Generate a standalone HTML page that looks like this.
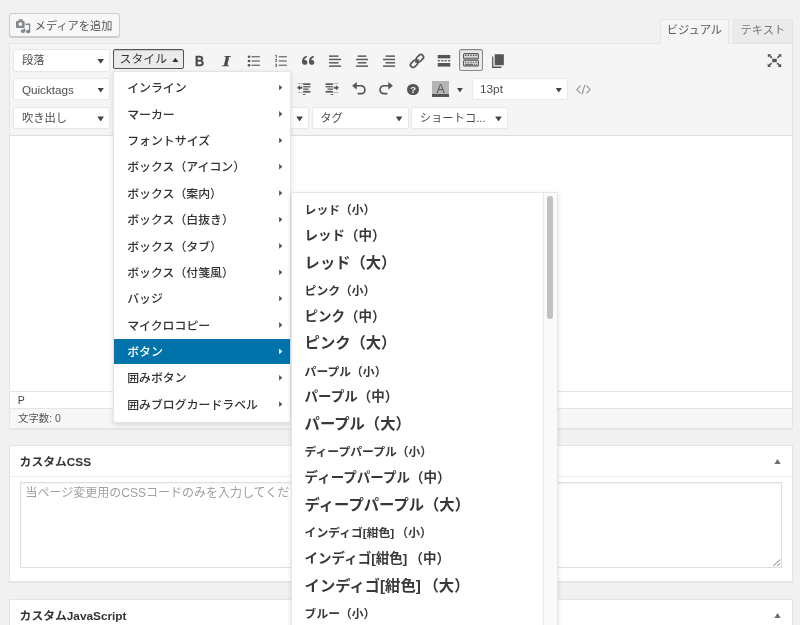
<!DOCTYPE html>
<html lang="ja">
<head>
<meta charset="utf-8">
<title>投稿の編集</title>
<style>
*{box-sizing:border-box;margin:0;padding:0}
html,body{width:800px;height:625px;overflow:hidden;background:#f1f1f1}
body{position:relative;will-change:transform;font-family:"Liberation Sans","Noto Sans CJK JP",sans-serif;font-size:11.3px;color:#444}
.abs{position:absolute}
i{display:block}
.ic{fill:#555}
#media{left:9px;top:13.3px;width:111px;height:23.7px;border:1px solid #ccc;border-radius:3px;background:#f7f7f7;box-shadow:0 1px 0 #ccc;color:#555}
#media span{position:absolute;left:24.8px;top:1.3px;line-height:21px;font-size:11.2px;white-space:nowrap}
.tab{font-size:11.3px;text-align:center;white-space:nowrap}
#tab1{left:660px;top:19px;width:69px;height:25px;background:#f5f5f5;border:1px solid #e5e5e5;border-bottom:none;color:#555;line-height:20.6px}
#tab2{left:733px;top:19px;width:60px;height:24px;background:#ebebeb;border:1px solid #e5e5e5;color:#777;line-height:20.6px}
#ed{left:9px;top:43px;width:784px;height:385.5px;border:1px solid #e5e5e5;background:#fff;box-shadow:0 1px 1px rgba(0,0,0,.04)}
#tb{left:0;top:0;width:782px;height:92px;background:#f5f5f5;border-bottom:1px solid #ddd}
#path{left:0;top:347px;width:782px;height:17px;border-top:1px solid #e5e5e5;background:#fff;font-size:10.5px;line-height:16px;padding-left:7.8px;color:#444}
#wc{left:0;top:364px;width:782px;height:20px;border-top:1px solid #e5e5e5;background:#f7f7f7;font-size:10.4px;line-height:19px;padding-left:8px;color:#555}
.sel{height:22.4px;background:#fff;border:1px solid #e8e8e8;border-radius:2px;font-size:11.3px;line-height:21px;padding-left:7.5px;color:#4d4d4d;white-space:nowrap}
.sel:after{content:"";position:absolute;left:83px;top:8.7px;width:6.6px;height:4.9px;background:#444;clip-path:polygon(0 0,100% 0,50% 100%)}
#stylebtn{left:113px;top:49px;width:71px;height:19.6px;border:1px solid #555;border-radius:2px;background:#ebebeb;box-shadow:inset 0 1px 1px rgba(0,0,0,.15);font-size:11.9px;line-height:18px;padding-left:5.5px;color:#333;white-space:nowrap}
#stylebtn i{position:absolute;left:58px;top:7.7px;width:6.7px;height:4.7px;background:#333;clip-path:polygon(0 100%,100% 100%,50% 0)}
.menu{background:#fff;border:1px solid #e5e5e5;box-shadow:0 2px 5px rgba(0,0,0,.13)}
.mi{font-weight:500;position:absolute;left:0;width:100%;height:24.7px;line-height:26px;font-size:11.9px;color:#333;padding-left:13.2px;white-space:nowrap}
.mi:after{content:"";position:absolute;left:165.1px;top:9.5px;width:3.3px;height:5.8px;background:#555;clip-path:polygon(0 0,100% 50%,0 100%)}
.mi.act{background:#0073aa;color:#fff}
.mi.act:after{background:#fff}
.m2{position:absolute;left:12.6px;font-weight:bold;color:#383838;white-space:nowrap;line-height:26px}
.pb{left:9px;width:784px;background:#fff;border:1px solid #e5e5e5;box-shadow:0 1px 1px rgba(0,0,0,.04)}
.pb h2{position:absolute;left:9.6px;top:.6px;font-size:11.8px;line-height:31px;font-weight:bold;color:#333;white-space:nowrap}
.pb .hd{position:absolute;left:0;top:0;width:782px;height:31px;border-bottom:1px solid #eee}
.pb .tg{position:absolute;left:764.2px;top:13.1px;width:6.7px;height:5.1px;background:#6c7074;clip-path:polygon(0 100%,100% 100%,50% 0)}
#ta{left:9.5px;top:35.6px;width:762.6px;height:86.4px;border:1px solid #dfdfdf;box-shadow:inset 0 1px 2px rgba(0,0,0,.05);font-size:12px;color:#a0a0a0;padding:.9px 5px;white-space:nowrap;overflow:hidden}
</style>
</head>
<body>
<div id="media" class="abs"><svg class="abs" style="left:6px;top:4.700px;width:15px;height:15px;overflow:visible" viewBox="0 0 15 15" fill="#82878c"><path fill-rule="evenodd" d="M.9 2.100h1.700V1c0-.4.300-.75.750-.75h2.650c.4 0 .75.300.75.750v1.100h.950c.5 0 .9.400.9.900v5c0 .5-.4.900-.9.900H.9c-.5 0-.9-.4-.9-.9V3c0-.5.400-.9.900-.9zM4.350 3.200a1.900 1.900 0 1 0 0 3.800 1.900 1.900 0 1 0 0-3.800z"/><path d="M9.300 4.400h4.950v1.500H9.300zM12.900 5.500h1.350v6.800H12.900zM8 9.600h1.300v2.100H8z"/><ellipse cx="12.100" cy="12.500" rx="2.200" ry="1.850"/><ellipse cx="7" cy="12.100" rx="2.200" ry="1.850"/></svg><span>メディアを追加</span></div>
<div id="tab2" class="abs tab">テキスト</div>
<div id="ed" class="abs">
  <div id="tb" class="abs"></div>
  <div id="path" class="abs">P</div>
  <div id="wc" class="abs">文字数: 0</div>
</div>
<div id="tab1" class="abs tab">ビジュアル</div>
<div id="tools">
<div class="abs sel" style="left:13.4px;top:49.2px;width:96.8px">段落</div>
<div class="abs sel" style="left:13.4px;top:78px;width:96.8px"><span style="font-size:11.7px">Quicktags</span></div>
<div class="abs sel" style="left:13.4px;top:106.8px;width:96.8px">吹き出し</div>
<div class="abs sel" style="left:112.8px;top:106.8px;width:96.8px">&nbsp;</div>
<div class="abs sel" style="left:212.3px;top:106.8px;width:96.8px">&nbsp;</div>
<div class="abs sel" style="left:311.8px;top:106.8px;width:96.8px">タグ</div>
<div class="abs sel" style="left:411.2px;top:106.8px;width:96.8px">ショートコ...</div>
<div class="abs sel" style="left:471.5px;top:78px;width:96.8px"><span style="font-size:11.8px">13pt</span></div>
<div class="abs" id="stylebtn">スタイル<i></i></div>
<div class="abs" style="left:193px;top:50.6px;width:13px;height:20px;line-height:20px;text-align:center;font-weight:bold;font-size:14px;color:#4a4a4a;-webkit-text-stroke:.35px #4a4a4a;transform:scaleX(.9)">B</div>
<div class="abs" style="left:219.5px;top:50.6px;width:13px;height:20px;line-height:20px;text-align:center;font-weight:bold;font-style:italic;font-family:'Liberation Serif',serif;font-size:15.5px;color:#4a4a4a;-webkit-text-stroke:.25px #4a4a4a;transform:scaleX(1.3)">I</div>
<svg class="abs ic" style="left:244.7px;top:52.0px;width:18px;height:18px" viewBox="0 0 20 20"><circle cx="4.5" cy="5.3" r="1.5"/><circle cx="4.5" cy="10" r="1.5"/><circle cx="4.5" cy="14.7" r="1.5"/><rect x="7.2" y="4.7" width="9.3" height="1.2"/><rect x="7.2" y="9.4" width="9.3" height="1.2"/><rect x="7.2" y="14.1" width="9.3" height="1.2"/></svg>
<svg class="abs ic" style="left:272.0px;top:51.8px;width:18px;height:18px" viewBox="0 0 20 20"><rect x="7.5" y="4.7" width="9" height="1.2"/><rect x="7.5" y="9.4" width="9" height="1.2"/><rect x="7.5" y="14.1" width="9" height="1.2"/><path d="M4.2 3h1v3.6h-.9V4.2l-.7.3v-.8zM3.4 8.2c.3-.5 2.2-.7 2.2.6 0 .8-.9 1.2-1.2 1.7h1.3v.7H3.3v-.6c.5-.6 1.400-1.300 1.400-1.800 0-.4-.6-.3-.9 0zM3.4 13.1h2.200v.6l-.8.800c.6.100.9.500.9 1 0 1.200-1.800 1.200-2.400.6l.4-.600c.3.300 1.100.400 1.100-.100 0-.400-.500-.400-1-.400v-.600l.7-.700H3.4z"/></svg>
<svg class="abs ic" style="left:298.1px;top:50.8px;width:19.8px;height:19.8px" viewBox="0 0 20 20"><path d="M9.2 6.300C7.500 6.900 6.500 8 6.400 9.200c.2-.1.500-.1.700-.1 1.400 0 2.400 1 2.400 2.400S8.400 14 7 14c-1.700 0-3-1.300-3-3.400 0-2.900 1.800-5.100 4.700-5.700zm7 0c-1.700.6-2.700 1.700-2.800 2.900.2-.1.500-.1.700-.1 1.400 0 2.400 1 2.400 2.400S15.400 14 14 14c-1.700 0-3-1.300-3-3.400 0-2.900 1.800-5.100 4.700-5.700z"/></svg>
<svg class="abs ic" style="left:325.7px;top:51.8px;width:18px;height:18px" viewBox="0 0 20 20"><rect x="3.4" y="3.8" width="10.5" height="1.6"/><rect x="3.4" y="7.5" width="13.3" height="1.6"/><rect x="3.4" y="11.2" width="10.5" height="1.6"/><rect x="3.4" y="14.9" width="13.3" height="1.6"/></svg>
<svg class="abs ic" style="left:353.0px;top:51.8px;width:18px;height:18px" viewBox="0 0 20 20"><rect x="5.2" y="3.8" width="9.6" height="1.6"/><rect x="3.4" y="7.5" width="13.3" height="1.6"/><rect x="5.2" y="11.2" width="9.6" height="1.6"/><rect x="3.4" y="14.9" width="13.3" height="1.6"/></svg>
<svg class="abs ic" style="left:380.3px;top:51.8px;width:18px;height:18px" viewBox="0 0 20 20"><rect x="6.2" y="3.8" width="10.5" height="1.6"/><rect x="3.4" y="7.5" width="13.3" height="1.6"/><rect x="6.2" y="11.2" width="10.5" height="1.6"/><rect x="3.4" y="14.9" width="13.3" height="1.6"/></svg>
<svg class="abs ic" style="left:407.8px;top:51.8px;width:18px;height:18px" viewBox="0 0 20 20"><g transform="rotate(-45 10 10)" fill="none" stroke="#555" stroke-width="1.9"><rect x="1" y="7.100" width="8.900" height="5.800" rx="2.900"/><rect x="10.100" y="7.100" width="8.900" height="5.800" rx="2.900"/><path d="M7.500 10h5" stroke-width="1.700"/></g></svg>
<svg class="abs ic" style="left:434.8px;top:51.6px;width:18px;height:18px" viewBox="0 0 20 20"><rect x="3" y="3.300" width="14" height="3.800"/><rect x="3" y="12.200" width="14" height="4"/><rect x="3" y="9" width="2.6" height="1.4"/><rect x="6.8" y="9" width="2.6" height="1.4"/><rect x="10.6" y="9" width="2.6" height="1.4"/><rect x="14.4" y="9" width="2.6" height="1.4"/></svg>
<div class="abs" style="left:459px;top:49px;width:24px;height:22.300px;border:1px solid #888;border-radius:2px;background:#ebebeb;box-shadow:inset 0 1px 1px rgba(0,0,0,.12)"></div>
<svg class="abs ic" style="left:463px;top:53px;width:16px;height:13.5px" viewBox="0 0 16 13.5"><g fill="none" stroke="#555" stroke-width="1.100"><rect x=".6" y=".6" width="14.800" height="5.300" rx="1"/><rect x=".6" y="7.300" width="14.800" height="5.600" rx="1"/></g><rect x="2" y="1.800" width="1.500" height="1.200"/><rect x="4.6" y="1.800" width="1.500" height="1.200"/><rect x="7.2" y="1.800" width="1.500" height="1.200"/><rect x="9.8" y="1.800" width="1.500" height="1.200"/><rect x="12.4" y="1.800" width="1.500" height="1.200"/><rect x="2" y="3.800" width="12" height=".9" opacity=".55"/><rect x="2" y="8.600" width="1.500" height="1.200"/><rect x="4.6" y="8.600" width="1.500" height="1.200"/><rect x="7.2" y="8.600" width="1.500" height="1.200"/><rect x="9.8" y="8.600" width="1.500" height="1.200"/><rect x="12.4" y="8.600" width="1.500" height="1.200"/><rect x="2" y="10.700" width="8" height="1.100"/><rect x="10.800" y="10.700" width="1.200" height="1.100"/><rect x="12.700" y="10.700" width="1.300" height="1.100"/></svg>
<svg class="abs ic" style="left:488.5px;top:51.9px;width:18px;height:18px" viewBox="0 0 20 20"><path d="M6.300 2.500h10.200v12.200H6.300z"/><path d="M4.800 5v11.200h9v1.500H3.400V5z"/></svg>
<svg class="abs ic" style="left:766.2px;top:51.6px;width:17px;height:17px" viewBox="0 0 20 20"><path d="M2 2.500h4.200L4.900 3.800l2.600 2.500-1.300 1.300L3.600 5 2.300 6.400zM18 2.500v3.900L16.700 5l-2.600 2.600-1.300-1.300 2.600-2.500-1.300-1.300zM2 17.500v-3.900l1.300 1.400 2.600-2.600 1.300 1.300-2.600 2.500 1.300 1.300zM18 17.500h-4.200l1.300-1.300-2.600-2.500 1.300-1.300 2.600 2.600 1.300-1.400zM7.300 7.800h5.400v4.400H7.300z"/></svg>
<svg class="abs ic" style="left:296.9px;top:83.1px;width:14px;height:12px" viewBox="0 0 14 12"><rect x=".6" y="0" width="12.800" height=".7" opacity=".55"/><rect x=".6" y="9.100" width="12.800" height=".7" opacity=".55"/><rect x="6.200" y=".5" width="7.200" height="1.500"/><rect x="6.200" y="3.100" width="7.200" height="1.300"/><rect x="6.200" y="5.500" width="5.300" height="1.300"/><rect x="6.200" y="7.900" width="7.200" height="1.500"/><rect x="5.800" y="11" width="2.700" height=".9"/><path d="M0 4.800L2.900 2.300v1.500H5.300v2H2.900v1.500z"/></svg>
<svg class="abs ic" style="left:325.1px;top:83.1px;width:14px;height:12px" viewBox="0 0 14 12"><rect x=".6" y="0" width="12.800" height=".7" opacity=".55"/><rect x=".6" y="9.100" width="12.800" height=".7" opacity=".55"/><rect x=".6" y=".5" width="7.200" height="1.500"/><rect x=".6" y="3.100" width="7.200" height="1.300"/><rect x="2.500" y="5.500" width="5.300" height="1.300"/><rect x=".6" y="7.900" width="7.200" height="1.500"/><rect x="5.500" y="11" width="2.700" height=".9"/><path d="M14 4.800L11.100 2.300v1.500H8.700v2h2.400v1.500z"/></svg>
<svg class="abs ic" style="left:349.7px;top:79.8px;width:18px;height:18px" viewBox="0 0 20 20"><path d="M7.500 2.300v3.200h4.700c3 0 5.300 2.300 5.300 5.300s-2.300 5.300-5.300 5.300H8.500v-1.800h3.700c2 0 3.500-1.500 3.500-3.500s-1.500-3.500-3.500-3.500H7.500v3.200L2.300 6.400z"/></svg>
<svg class="abs ic" style="left:377.3px;top:79.8px;width:18px;height:18px" viewBox="0 0 20 20"><path d="M12.500 2.300v3.200H7.800c-3 0-5.300 2.300-5.300 5.300s2.300 5.300 5.300 5.300h3.700v-1.800H7.800c-2 0-3.500-1.500-3.500-3.500s1.500-3.500 3.500-3.500h4.700v3.200l5.200-4.100z"/></svg>
<div class="abs" style="left:407.2px;top:83.6px;width:11.7px;height:11.7px;border-radius:50%;background:#555;color:#f5f5f5;font-weight:bold;font-size:9.5px;line-height:11.7px;text-align:center">?</div>
<div class="abs" style="left:432px;top:81.2px;width:17.2px;height:16.3px;background:#b5b5b5;border-bottom:3.1px solid #555;color:#555;font-size:12.3px;line-height:17.3px;text-align:center">A</div>
<i class="abs" style="left:456.9px;top:87.8px;width:6px;height:4.600px;background:#444;clip-path:polygon(0 0,100% 0,50% 100%)"></i>
<svg class="abs ic" style="left:574.5px;top:80.9px;width:17px;height:17px" viewBox="0 0 20 20"><g fill="none" stroke="#8a8a8a" stroke-width="1.2"><path d="M6.500 5.500L2.300 10l4.200 4.500M13.500 5.500l4.200 4.500-4.200 4.500M11.500 4.500l-3 11"/></g></svg>
</div>
<div class="abs pb" style="top:445px;height:137px">
  <div class="hd"></div><h2>カスタムCSS</h2><div class="tg"></div>
  <div id="ta" class="abs">当ページ変更用のCSSコードのみを入力してください。<svg class="abs" style="right:0;bottom:0;width:9px;height:9px" viewBox="0 0 9 9" stroke="#666" stroke-width=".9" fill="none"><path d="M1.200 8L8 1.600M5.300 8L8 5.500"/></svg></div>
</div>
<div class="abs pb" style="top:599px;height:60px">
  <div class="hd"></div><h2>カスタムJavaScript</h2><div class="tg"></div>
</div>
<div id="menu1" class="abs menu" style="left:113px;top:70.5px;width:178px;height:352.5px">
  <div class="mi" style="top:3.7px">インライン</div>
  <div class="mi" style="top:30.1px">マーカー</div>
  <div class="mi" style="top:56.5px">フォントサイズ</div>
  <div class="mi" style="top:82.8px">ボックス（アイコン）</div>
  <div class="mi" style="top:109.2px">ボックス（案内）</div>
  <div class="mi" style="top:135.6px">ボックス（白抜き）</div>
  <div class="mi" style="top:162.0px">ボックス（タブ）</div>
  <div class="mi" style="top:188.4px">ボックス（付箋風）</div>
  <div class="mi" style="top:214.7px">バッジ</div>
  <div class="mi" style="top:241.1px">マイクロコピー</div>
  <div class="mi act" style="top:267.5px">ボタン</div>
  <div class="mi" style="top:293.9px">囲みボタン</div>
  <div class="mi" style="top:320.3px">囲みブログカードラベル</div>
</div>
<div id="menu2" class="abs menu" style="left:291px;top:192px;width:267px;height:440px">
  <div class="m2" style="top:4.0px;font-size:11.8px">レッド（小）</div>
  <div class="m2" style="top:29.8px;font-size:13.5px">レッド（中）</div>
  <div class="m2" style="top:56.5px;font-size:15.3px">レッド（大）</div>
  <div class="m2" style="top:84.8px;font-size:11.8px">ピンク（小）</div>
  <div class="m2" style="top:110.6px;font-size:13.5px">ピンク（中）</div>
  <div class="m2" style="top:137.3px;font-size:15.3px">ピンク（大）</div>
  <div class="m2" style="top:165.6px;font-size:11.8px">パープル（小）</div>
  <div class="m2" style="top:191.4px;font-size:13.5px">パープル（中）</div>
  <div class="m2" style="top:218.1px;font-size:15.3px">パープル（大）</div>
  <div class="m2" style="top:246.4px;font-size:11.8px">ディープパープル（小）</div>
  <div class="m2" style="top:272.2px;font-size:13.5px">ディープパープル（中）</div>
  <div class="m2" style="top:298.9px;font-size:15.3px">ディープパープル（大）</div>
  <div class="m2" style="top:327.2px;font-size:11.8px">インディゴ[紺色]<span style="margin-left:.18em"></span>（小）</div>
  <div class="m2" style="top:353.0px;font-size:13.5px">インディゴ[紺色]<span style="margin-left:.18em"></span>（中）</div>
  <div class="m2" style="top:379.7px;font-size:15.3px">インディゴ[紺色]<span style="margin-left:.18em"></span>（大）</div>
  <div class="m2" style="top:408.0px;font-size:11.8px">ブルー（小）</div>
  <div class="abs" style="left:251.2px;top:0;width:14.300px;height:440px;background:#fafafa;border-left:1px solid #e8e8e8"></div>
  <div class="abs" style="left:254.800px;top:2.500px;width:6.400px;height:123.200px;border-radius:3.200px;background:#c1c1c1"></div>
</div>
</body>
</html>
